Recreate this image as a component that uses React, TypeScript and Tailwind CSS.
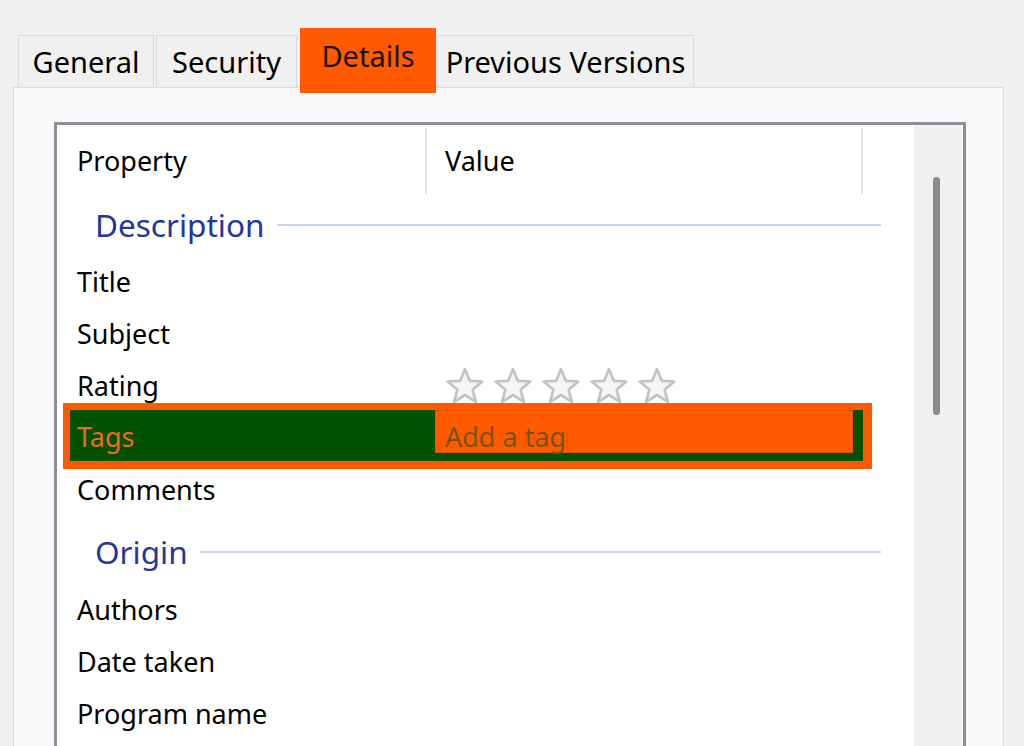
import React from "react"

const font = { fontFamily: '"Noto Sans", "Liberation Sans", Arial, sans-serif' }

function Star() {
  return (
    <svg width="40" height="40" viewBox="0 0 24 24">
      <polygon
        points="12,2 14.9,8.9 22.4,9.3 16.6,14.1 18.5,21.5 12,17.4 5.5,21.5 7.4,14.1 1.6,9.3 9.1,8.9"
        fill="#f5f5f5"
        stroke="#c2c2c2"
        strokeWidth="1.6"
        strokeLinejoin="round"
      />
    </svg>
  )
}

function Row({ label, children }: { label: string; children?: React.ReactNode }) {
  return (
    <div className="flex h-[52px] items-center text-[27px] text-black">
      <div className="w-[368px] pl-[20px]">{label}</div>
      <div className="flex items-center pl-[20px]">{children}</div>
    </div>
  )
}

function Group({ label, height, top }: { label: string; height: string; top: string }) {
  return (
    <div className={`flex items-center ${height} ${top} pl-[38px] pr-[33px]`}>
      <span className="text-[31.5px] text-[#24369a]">{label}</span>
      <div className="ml-[12px] h-[2px] flex-1 bg-[#c8d3ed]" />
    </div>
  )
}

function Tab({ label, width }: { label: string; width: string }) {
  return (
    <div className={`mt-[7px] flex h-[52px] ${width} items-center justify-center border border-b-0 border-[#d9d9d9] bg-[#f0f0f0] text-[29px] text-black`}>
      {label}
    </div>
  )
}

export default function App() {
  return (
    <div style={font} className="h-[746px] w-[1024px] overflow-hidden bg-[#f0f0f0] pl-[13px] pr-[20px] pt-[28px]">
      <div className="flex h-[59px] items-start gap-[2px] pl-[5px]">
        <Tab label="General" width="w-[136px]" />
        <Tab label="Security" width="w-[141px]" />
        <div className="relative z-10 ml-[1px] flex h-[65px] w-[136px] items-start justify-center bg-[#ff5a00] pt-[6px] text-[29px] text-[#1a1200]">
          Details
        </div>
        <div className="-ml-[1px] mt-[7px] flex h-[52px] w-[257px] items-center justify-center border border-b-0 border-[#d9d9d9] bg-[#f0f0f0] text-[29px] text-black">
          Previous Versions
        </div>
      </div>

      <div className="h-[700px] border border-[#dcdcdc] bg-[#f9f9f9] pl-[40px] pr-[37px] pt-[34px]">
        <div className="flex h-[700px] border-[3px] border-[#8b8f97] bg-white">
          <div className="w-[857px]">
            <div className="flex h-[72px] items-stretch py-[3px] text-[27px] text-black">
              <div className="flex w-[368px] items-center pl-[20px]">Property</div>
              <div className="w-[2px] bg-[#e6e6e6]" />
              <div className="flex w-[434px] items-center pl-[18px]">Value</div>
              <div className="w-[2px] bg-[#e6e6e6]" />
            </div>

            <Group label="Description" height="h-[59px]" top="pb-[4px]" />
            <Row label="Title" />
            <Row label="Subject" />
            <Row label="Rating">
              <div className="flex gap-[8px]">
                <Star />
                <Star />
                <Star />
                <Star />
                <Star />
              </div>
            </Row>

            <div className="relative -mb-[5px] -mt-[9px] ml-[6px] h-[66px] w-[809px] border-b-[8px] border-l-[7px] border-r-[9px] border-t-[7px] border-[#ff5a00] bg-[#005200]">
              <div className="flex h-full items-start">
                <div className="flex h-full w-[365px] items-center pl-[7px] pt-[4px] text-[27px] text-[#ee6a1e]">Tags</div>
                <div className="flex h-[43px] w-[418px] items-center border border-[#e85200] bg-[#ff5a00] pl-[9px] pt-[12px] text-[27px] text-[#7a5300]">
                  Add a tag
                </div>
              </div>
            </div>

            <Row label="Comments" />
            <Group label="Origin" height="h-[68px]" top="pt-[4px]" />
            <Row label="Authors" />
            <Row label="Date taken" />
            <Row label="Program name" />
          </div>

          <div className="w-[47px] bg-[#f0f0f0] pl-[19px] pt-[52px]">
            <div className="h-[238px] w-[7px] rounded-full bg-[#8a8a8a]" />
          </div>
        </div>
      </div>
    </div>
  )
}
